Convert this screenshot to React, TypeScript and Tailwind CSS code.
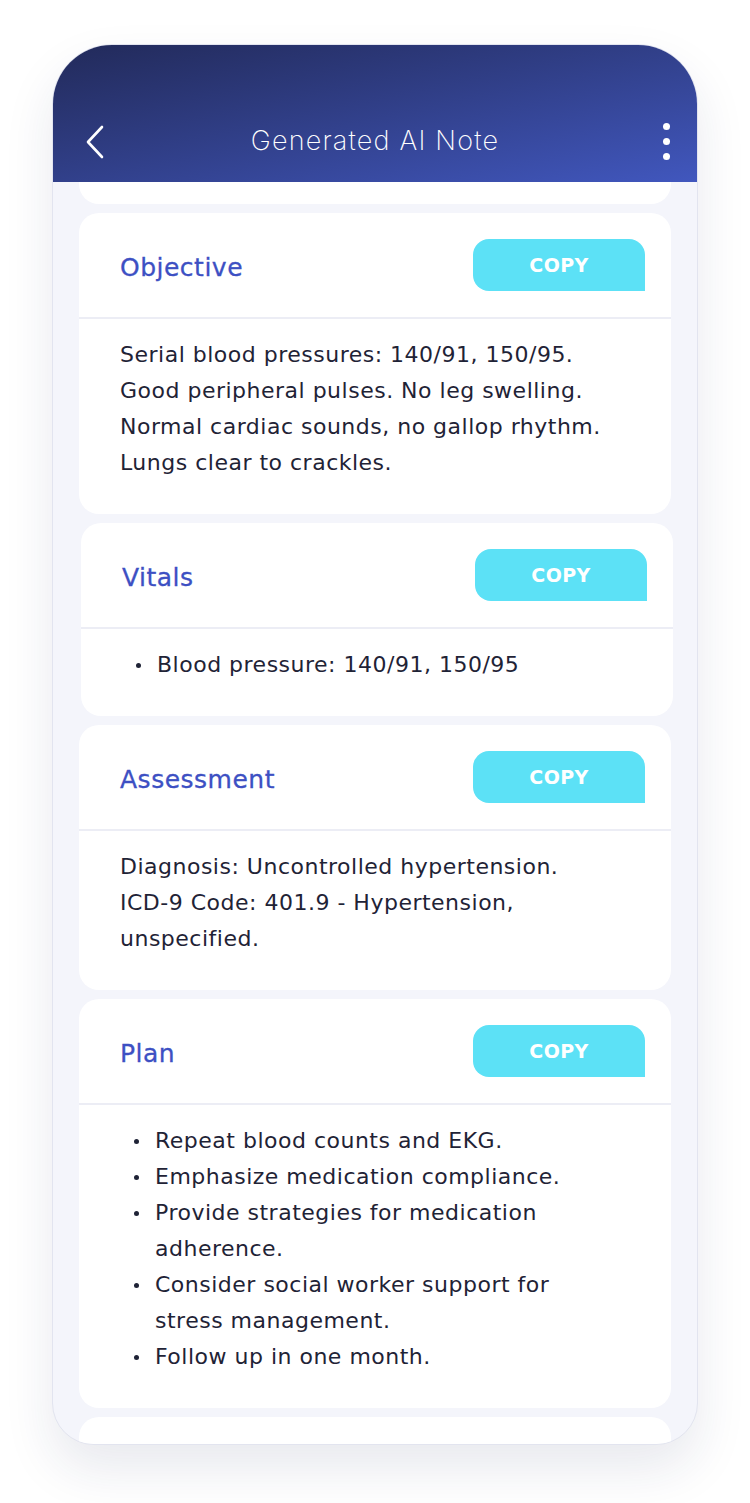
const font = { fontFamily: '"DejaVu Sans", "Noto Sans", sans-serif' };

interface NoteCardProps {
  title: string;
  shift?: boolean;
  children: React.ReactNode;
}

function NoteCard({ title, shift, children }: NoteCardProps) {
  return (
    <div
      className={`bg-white rounded-[20px] ${shift ? 'ml-[28px] mr-[24px]' : 'mx-[26px]'}`}
    >
      <div className="flex items-center justify-between pl-[41px] pr-[26px] py-[26px]">
        <h2 className="text-[25px] leading-none pt-[5px] text-[#3d50c3] tracking-[0.5px] [-webkit-text-stroke:0.3px_#3d50c3]">
          {title}
        </h2>
        <button className="w-[172px] h-[52px] rounded-[16px] rounded-br-none bg-[#5ce1f6] text-white font-bold text-[19px] tracking-[0.4px]">
          COPY
        </button>
      </div>
      <div className="h-[2px] bg-[#ecedf5]" />
      <div className="px-[41px] pt-[18px] pb-[33px] text-[22px] leading-[36px] tracking-[0.5px] text-[#1f2336]">
        {children}
      </div>
    </div>
  );
}

function Bullets({ items }: { items: string[] }) {
  return (
    <div className="pl-[14px] pr-[16px]">
      {items.map((item) => (
        <div key={item} className="flex">
          <span className="w-[21px] shrink-0 flex items-start pt-[16px]">
            <span className="block w-[5px] h-[5px] rounded-full bg-[#1f2336]" />
          </span>
          <span>{item}</span>
        </div>
      ))}
    </div>
  );
}

export default function App() {
  return (
    <div className="min-h-[1503px] bg-white pt-[44px] px-[52px]" style={font}>
      <div className="h-[1401px] rounded-t-[60px] rounded-b-[42px] overflow-hidden bg-[#f4f5fb] border border-[#e2e4ef] shadow-[0_24px_50px_rgba(30,40,90,0.10)] flex flex-col">
        {/* Header */}
        <div className="h-[137px] shrink-0 bg-linear-to-br from-[#222a5a] to-[#4157be] grid grid-cols-[1fr_auto_1fr] items-center pt-[56px] px-[25px]">
          <svg className="ml-[7px]" width="20" height="34" viewBox="0 0 20 34" fill="none">
            <path d="M17 2 L3 17 L17 32" stroke="white" strokeWidth="2.6" strokeLinecap="round" strokeLinejoin="round" />
          </svg>
          <h1
            className="text-white text-[27px] font-extralight tracking-[1.2px]"
            style={{ fontFamily: 'Inter, "Noto Sans", sans-serif' }}
          >
            Generated AI Note
          </h1>
          <div className="flex justify-end">
            <div className="flex flex-col items-center gap-[8px] w-[12px]">
              <span className="w-[7px] h-[7px] rounded-full bg-white" />
              <span className="w-[7px] h-[7px] rounded-full bg-white" />
              <span className="w-[7px] h-[7px] rounded-full bg-white" />
            </div>
          </div>
        </div>

        {/* Scrolled content */}
        <div className="flex flex-col gap-[9px]">
          <div className="mx-[26px] h-[22px] bg-white rounded-b-[20px]" />

          <NoteCard title="Objective">
            <p>Serial blood pressures: 140/91, 150/95.</p>
            <p>Good peripheral pulses. No leg swelling.</p>
            <p>Normal cardiac sounds, no gallop rhythm.</p>
            <p>Lungs clear to crackles.</p>
          </NoteCard>

          <NoteCard title="Vitals" shift>
            <Bullets items={['Blood pressure: 140/91, 150/95']} />
          </NoteCard>

          <NoteCard title="Assessment">
            <p>Diagnosis: Uncontrolled hypertension.</p>
            <p>ICD-9 Code: 401.9 - Hypertension,</p>
            <p>unspecified.</p>
          </NoteCard>

          <NoteCard title="Plan">
            <Bullets
              items={[
                'Repeat blood counts and EKG.',
                'Emphasize medication compliance.',
                'Provide strategies for medication adherence.',
                'Consider social worker support for stress management.',
                'Follow up in one month.',
              ]}
            />
          </NoteCard>

          <div className="mx-[26px] h-[60px] bg-white rounded-t-[20px] shrink-0" />
        </div>
      </div>
    </div>
  );
}
